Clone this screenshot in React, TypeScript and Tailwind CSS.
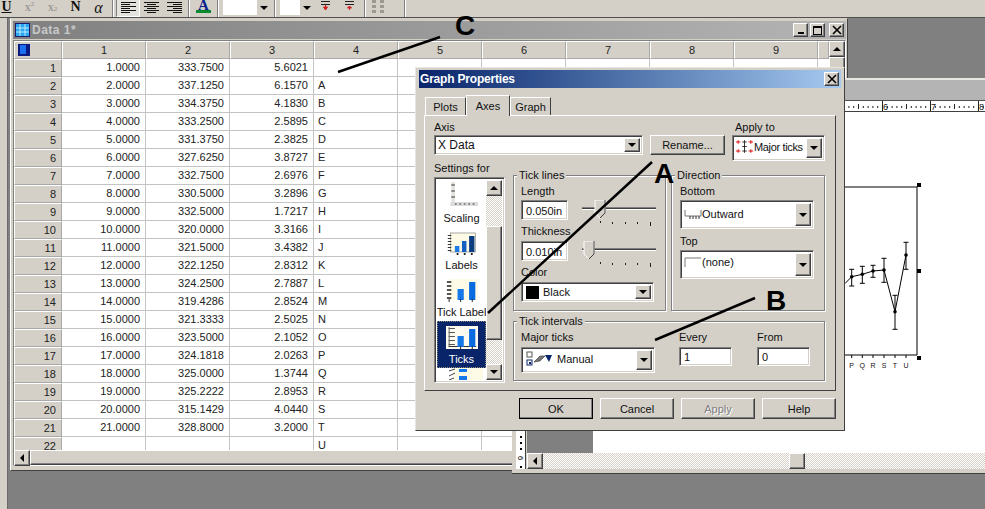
import type { ReactNode } from "react";

const RAISED = "border border-t-white border-l-white border-r-[#404040] border-b-[#404040] shadow-[inset_-1px_-1px_0_#808080] bg-[#d4d0c8]";
const SUNKEN = "border border-t-[#808080] border-l-[#808080] border-r-white border-b-white shadow-[inset_1px_1px_0_#404040,inset_-1px_-1px_0_#d4d0c8] bg-white";
const DITHER = "bg-[repeating-conic-gradient(#d4d0c8_0%_25%,#ffffff_0%_50%)] bg-[length:2px_2px]";

const ROWS = [
  ["1.0000", "333.7500", "5.6021"],
  ["2.0000", "337.1250", "6.1570"],
  ["3.0000", "334.3750", "4.1830"],
  ["4.0000", "333.2500", "2.5895"],
  ["5.0000", "331.3750", "2.3825"],
  ["6.0000", "327.6250", "3.8727"],
  ["7.0000", "332.7500", "2.6976"],
  ["8.0000", "330.5000", "3.2896"],
  ["9.0000", "332.5000", "1.7217"],
  ["10.0000", "320.0000", "3.3166"],
  ["11.0000", "321.5000", "3.4382"],
  ["12.0000", "322.1250", "2.8312"],
  ["13.0000", "324.2500", "2.7887"],
  ["14.0000", "319.4286", "2.8524"],
  ["15.0000", "321.3333", "2.5025"],
  ["16.0000", "323.5000", "2.1052"],
  ["17.0000", "324.1818", "2.0263"],
  ["18.0000", "325.0000", "1.3744"],
  ["19.0000", "325.2222", "2.8953"],
  ["20.0000", "315.1429", "4.0440"],
  ["21.0000", "328.8000", "3.2000"],
  ["", "", ""],
];
const LETTERS = ["", "A", "B", "C", "D", "E", "F", "G", "H", "I", "J", "K", "L", "M", "N", "O", "P", "Q", "R", "S", "T", "U"];

function Arrow({ dir }: { dir: "up" | "down" | "left" }) {
  const pts = dir === "up" ? "0,5 4,1 8,5" : dir === "down" ? "0,1 8,1 4,5" : "5,0 5,8 1,4";
  const size = dir === "left" ? "w-[6px] h-[8px]" : "w-[8px] h-[6px]";
  return (
    <svg viewBox={dir === "left" ? "0 0 6 8" : "0 0 8 6"} className={size}>
      <polygon points={pts} fill="#000" />
    </svg>
  );
}

function ScrollBtn({ dir }: { dir: "up" | "down" | "left" }) {
  return (
    <div className={`${RAISED} w-[16px] h-[16px] shrink-0 flex items-center justify-center`}>
      <Arrow dir={dir} />
    </div>
  );
}

function CloseGlyph() {
  return (
    <svg viewBox="0 0 10 10" className="w-[10px] h-[10px]">
      <path d="M1 1 L9 9 M9 1 L1 9" stroke="#000" strokeWidth="1.6" />
    </svg>
  );
}

function Combo({ className, children }: { className: string; children?: ReactNode }) {
  return (
    <div className={`${SUNKEN} ${className} flex items-stretch p-[2px]`}>
      <div className="flex-1 flex items-center min-w-0 overflow-hidden">{children}</div>
      <div className={`${RAISED} w-[16px] shrink-0 flex items-center justify-center`}>
        <Arrow dir="down" />
      </div>
    </div>
  );
}

function Group({ title, className, children }: { title: string; className: string; children: ReactNode }) {
  return (
    <div className={`relative border border-[#808080] shadow-[1px_1px_0_#fff,inset_1px_1px_0_#fff] ${className}`}>
      <span className="absolute -top-[7px] left-[3px] bg-[#d4d0c8] px-[2px] leading-[13px]">{title}</span>
      {children}
    </div>
  );
}

function Field({ label, className }: { label: string; className: string }) {
  return <div className={`${SUNKEN} ${className} flex items-center pl-[4px] pt-px`}>{label}</div>;
}

function Slider({ thumb }: { thumb: number }) {
  return (
    <svg width="76" height="28" viewBox="0 0 76 28" className="ml-[13px] shrink-0">
      <rect x="1" y="7" width="74" height="1" fill="#808080" />
      <rect x="1" y="8" width="74" height="1" fill="#404040" />
      <rect x="1" y="9" width="74" height="1" fill="#ffffff" />
      <path d={`M${thumb} 0 H${thumb + 10} V13 L${thumb + 5} 18 L${thumb} 13 Z`} fill="#d4d0c8" stroke="#fff" strokeWidth="1" />
      <path d={`M${thumb + 10} 0 V13 L${thumb + 5} 18`} fill="none" stroke="#404040" strokeWidth="1" />
      {[19, 31, 44, 56, 69].map((x) => (
        <rect key={x} x={x} y={x === 19 ? 21 : 22} width="1" height={x === 69 ? 4 : 2} fill="#202020" />
      ))}
    </svg>
  );
}

function Thumb({ kind }: { kind: "scaling" | "labels" | "ticklabel" | "ticks" }) {
  if (kind === "scaling") {
    return (
      <svg width="32" height="26" viewBox="0 0 36 26" preserveAspectRatio="none" className="-mt-[3px]">
        <rect x="6" y="0" width="4" height="22" fill="#e4e2dc" />
        {[2, 8, 14].map((y) => <rect key={y} x="6" y={y} width="4" height="2" fill="#8a8a8a" />)}
        <rect x="5" y="20" width="31" height="4" fill="#dcdcdc" />
        {[10, 15, 20, 25, 30].map((x) => <rect key={x} x={x} y="21" width="2" height="2" fill="#8a8a8a" />)}
      </svg>
    );
  }
  if (kind === "labels") {
    return (
      <svg width="32" height="23" viewBox="0 0 36 23" preserveAspectRatio="none">
        <rect x="5" y="1" width="28" height="19" fill="#fdfbe6" stroke="#6e6e6e" strokeWidth="0.6" />
        {[3, 6, 9, 12, 15, 18].map((y) => <rect key={y} x="2" y={y} width="4" height="1" fill="#333" />)}
        <rect x="10" y="14" width="5" height="6" fill="#1c7ae8" />
        <rect x="18" y="9" width="5" height="11" fill="#1560c0" />
        <rect x="26" y="4" width="6" height="16" fill="#0b3d80" />
        {[12, 20, 28].map((x) => <rect key={x} x={x} y="21" width="2" height="2" fill="#222" />)}
      </svg>
    );
  }
  const bars = (
    <>
      <rect x="13" y="10" width="7" height="11" fill="#1578e8" />
      <rect x="26" y="3" width="7" height="18" fill="#0a6ae0" />
      <rect x="16" y="20" width="1" height="3" fill="#111" />
      <rect x="29" y="20" width="1" height="3" fill="#111" />
    </>
  );
  if (kind === "ticklabel") {
    return (
      <svg width="32" height="23" viewBox="0 0 36 23" preserveAspectRatio="none">
        <rect x="4" y="0" width="32" height="21" fill="#fdfbe6" />
        {[2, 6, 10, 14, 18].map((y) => <rect key={y} x="1" y={y} width="5" height="2" fill="#555" />)}
        {bars}
        <rect x="3" y="20" width="1" height="3" fill="#111" />
      </svg>
    );
  }
  return (
    <svg width="32" height="23" viewBox="0 0 36 23" preserveAspectRatio="none">
      <rect x="0" y="0" width="36" height="23" fill="#fdfbf0" />
      <rect x="3" y="1" width="1" height="20" fill="#555" />
      {[2, 6, 10, 14, 18].map((y) => <rect key={y} x="3" y={y} width="7" height="1" fill="#555" />)}
      <rect x="3" y="20" width="31" height="1" fill="#333" />
      {bars}
    </svg>
  );
}

function ListItem({ label, kind, selected }: { label: string; kind: "scaling" | "labels" | "ticklabel" | "ticks"; selected?: boolean }) {
  return (
    <div
      className={`h-[47px] shrink-0 flex flex-col items-center pt-[5px] whitespace-nowrap ${
        selected ? "bg-[#0a246a] text-white outline-1 -outline-offset-1 outline-dotted outline-[#8f8f80]" : ""
      }`}
    >
      <div className="h-[23px]"><Thumb kind={kind} /></div>
      <span className="mt-[4px] leading-[13px]">{label}</span>
    </div>
  );
}

function SettingsList() {
  return (
    <div className={`${SUNKEN} h-[206px] w-[71px] flex p-[2px] overflow-hidden`}>
      <div className="w-[52px] flex flex-col overflow-hidden">
        <ListItem label="Scaling" kind="scaling" />
        <ListItem label="Labels" kind="labels" />
        <ListItem label="Tick Label" kind="ticklabel" />
        <ListItem label="Ticks" kind="ticks" selected />
        <svg width="52" height="16" viewBox="0 0 52 16" className="shrink-0">
          <rect x="16" y="0" width="30" height="16" fill="#fdfbe6" />
          <path d="M12 3 L18 1 M12 8 L18 5 M12 12 L17 10" stroke="#444" strokeWidth="1" />
          <rect x="22" y="1" width="8" height="3" fill="#1578e8" />
          <rect x="22" y="8" width="8" height="8" fill="#1578e8" />
        </svg>
      </div>
      <div className="w-[16px] ml-auto flex flex-col">
        <ScrollBtn dir="up" />
        <div className={`flex-1 flex flex-col ${DITHER}`}>
          <div className="h-[30px]" />
          <div className={`${RAISED} h-[114px]`} />
        </div>
        <ScrollBtn dir="down" />
      </div>
    </div>
  );
}

function DialogButton({ label, primary, disabled }: { label: string; primary?: boolean; disabled?: boolean }) {
  return (
    <div
      className={`${RAISED} w-[74px] h-[21px] flex items-center justify-center ${primary ? "outline outline-1 outline-black -outline-offset-1" : ""} ${
        disabled ? "text-[#808080] [text-shadow:1px_1px_0_#fff]" : ""
      }`}
    >
      {label}
    </div>
  );
}

function GraphProperties() {
  return (
    <div className="absolute left-[406px] top-[49px] w-[430px] h-[364px] z-20 bg-[#d4d0c8] border border-t-[#e8e6e0] border-l-[#e8e6e0] border-r-[#404040] border-b-[#404040] p-[2px] pb-0 text-[11px] leading-[14px] text-[#111]">
      <div className="h-[18px] mx-px bg-linear-to-r from-[#0a246a] to-[#a6caf0] flex items-center justify-between pl-px pr-[2px]">
        <span className="text-white font-bold text-[12px] tracking-[-0.2px]">Graph Properties</span>
        <div className={`${RAISED} w-[15px] h-[14px] flex items-center justify-center`}>
          <CloseGlyph />
        </div>
      </div>

      <div className="flex items-end h-[27px] ml-[7px]">
        <div className="w-[41px] h-[18px] border border-b-0 border-t-white border-l-white border-r-[#404040] flex items-center justify-center">Plots</div>
        <div className="w-[44px] h-[21px] border border-b-0 border-t-white border-l-white border-r-[#404040] flex items-start pt-[3px] justify-center relative z-10 -mb-px bg-[#d4d0c8]">Axes</div>
        <div className="w-[41px] h-[18px] border border-b-0 border-t-white border-l-white border-r-[#404040] flex items-center justify-center">Graph</div>
      </div>

      <div className="ml-[6px] w-[412px] h-[276px] border border-t-white border-l-white border-r-[#404040] border-b-[#404040] pl-[9px] pt-[4px]">
        <div className="flex h-[42px]">
          <div className="w-[209px]">
            <div className="h-[15px]">Axis</div>
            <Combo className="h-[20px]"><span className="pl-[1px] text-[12px]">X Data</span></Combo>
          </div>
          <div className={`${RAISED} ml-[7px] mt-[15px] w-[75px] h-[20px] flex items-center justify-center`}>Rename...</div>
          <div className="ml-[7px] w-[93px]">
            <div className="h-[15px] pl-[3px]">Apply to</div>
            <Combo className="h-[26px]">
              <div className="flex items-center -mt-[3px]">
                <svg width="19" height="15" viewBox="0 0 21 16" className="shrink-0">
                  <path d="M1 3 H6 M3.5 1 V5 M1 13 H6 M3.5 11 V15 M15 3 H20 M17.5 1 V5 M15 13 H20 M17.5 11 V15" stroke="#e00000" strokeWidth="1" />
                  <path d="M10.5 1 V15 M8 3 H13 M8 8 H13 M8 13 H13" stroke="#222" strokeWidth="1" />
                </svg>
                <span className="whitespace-nowrap tracking-[-0.35px]">Major ticks</span>
              </div>
            </Combo>
          </div>
        </div>

        <div className="flex">
          <div className="w-[71px]">
            <div className="h-[16px] -mt-px">Settings for</div>
            <SettingsList />
          </div>
          <div className="ml-[8px] mt-[13px]">
            <div className="flex gap-[5px]">
              <Group title="Tick lines" className="w-[153px] h-[136px] pl-[7px] pt-[8px]">
                <div className="h-[16px]">Length</div>
                <div className="flex h-[20px]">
                  <Field label="0.050in" className="w-[47px] h-[20px] shrink-0" />
                  <Slider thumb={14} />
                </div>
                <div className="h-[17px] mt-[4px]">Thickness</div>
                <div className="flex h-[20px]">
                  <Field label="0.010in" className="w-[47px] h-[20px] shrink-0" />
                  <Slider thumb={3} />
                </div>
                <div className="h-[16px] mt-[4px]">Color</div>
                <Combo className="h-[20px] w-[133px] mt-px">
                  <div className="w-[13px] h-[13px] bg-black ml-[2px] mr-[4px] shrink-0" />
                  <span>Black</span>
                </Combo>
              </Group>
              <Group title="Direction" className="w-[154px] h-[136px] pl-[8px] pt-[8px]">
                <div className="h-[16px]">Bottom</div>
                <Combo className="h-[29px] w-[134px]">
                  <div className="flex items-center -mt-[2px]">
                    <svg width="18" height="12" viewBox="0 0 18 12" className="ml-[1px] shrink-0">
                      <path d="M1 2 V8 H17 V2" fill="none" stroke="#777" strokeWidth="1" />
                      <path d="M6 8 V11 M9 8 V11 M12 8 V11 M15 8 V11" stroke="#333" strokeWidth="1" />
                    </svg>
                    <span>Outward</span>
                  </div>
                </Combo>
                <div className="h-[16px] mt-[5px]">Top</div>
                <Combo className="h-[29px] w-[134px]">
                  <div className="flex items-center -mt-[6px]">
                    <svg width="18" height="12" viewBox="0 0 18 12" className="ml-[1px] shrink-0">
                      <path d="M1 11 V2 H17" fill="none" stroke="#777" strokeWidth="1" />
                    </svg>
                    <span>(none)</span>
                  </div>
                </Combo>
              </Group>
            </div>
            <Group title="Tick intervals" className="w-[312px] h-[60px] mt-[10px] pl-[7px] pt-[8px] flex">
              <div className="w-[134px]">
                <div className="h-[17px]">Major ticks</div>
                <Combo className="h-[26px]">
                  <div className="flex items-center -mt-[3px]">
                    <svg width="28" height="16" viewBox="0 0 28 16" className="ml-[2px] shrink-0">
                      <rect x="1" y="1" width="5" height="5" fill="#fff" stroke="#555" />
                      <rect x="1" y="9" width="5" height="5" fill="#fff" stroke="#0a246a" />
                      <rect x="3" y="11" width="2" height="2" fill="#0a246a" />
                      <path d="M8 11 L14 5 H19 L14 10 Z" fill="#777" stroke="#333" strokeWidth="0.6" />
                      <path d="M19 4 H26 L23 11 Z" fill="#0a246a" />
                    </svg>
                    <span className="ml-[3px]">Manual</span>
                  </div>
                </Combo>
              </div>
              <div className="ml-[24px] w-[53px]">
                <div className="h-[17px]">Every</div>
                <Field label="1" className="h-[19px]" />
              </div>
              <div className="ml-[25px] w-[53px]">
                <div className="h-[17px]">From</div>
                <Field label="0" className="h-[19px]" />
              </div>
            </Group>
          </div>
        </div>
      </div>

      <div className="flex justify-end gap-[7px] mt-[7px] pr-[6px]">
        <DialogButton label="OK" primary />
        <DialogButton label="Cancel" />
        <DialogButton label="Apply" disabled />
        <DialogButton label="Help" />
      </div>
    </div>
  );
}

function DataWindow() {
  const colHead = "border-t border-l border-t-white border-l-white border-r border-b border-r-[#a8a8a8] border-b-[#a8a8a8] bg-[#d4d0c8] flex items-center justify-center";
  const rowHead = "w-[48px] shrink-0 border-t border-l border-t-white border-l-white border-r border-b border-r-[#a8a8a8] border-b-[#a8a8a8] bg-[#d4d0c8] flex items-center justify-end pr-[5px]";
  return (
    <div className="absolute left-[1px] top-0 w-[838px] h-[453px] bg-[#d4d0c8] border border-t-[#d4d0c8] border-l-white border-r-[#404040] border-b-[#404040] px-px pt-[1px] flex flex-col text-[11px] text-[#222]">
      <div className="h-[18px] shrink-0 ml-px mt-px bg-linear-to-r from-[#808080] to-[#b4b4b4] flex items-center pl-[2px] pr-[2px]">
        <svg width="15" height="14" viewBox="0 0 15 14" className="shrink-0">
          <rect x="0.5" y="0.5" width="14" height="13" fill="#28a8f0" stroke="#1c1c70" />
          <path d="M5 1 V13 M10 1 V13 M1 5 H14 M1 9 H14" stroke="#bfe8ff" strokeWidth="1" />
        </svg>
        <span className="ml-[2px] font-bold text-[12px] text-[#c8c8c8] tracking-[0.5px]">Data 1*</span>
        <div className="ml-auto flex gap-[2px]">
          <div className={`${RAISED} w-[15px] h-[14px] flex items-end justify-center pb-[2px]`}><div className="w-[6px] h-[2px] bg-black" /></div>
          <div className={`${RAISED} w-[15px] h-[14px] flex items-center justify-center`}><div className="w-[9px] h-[9px] border border-black border-t-2" /></div>
          <div className={`${RAISED} w-[15px] h-[14px] ml-[2px] flex items-center justify-center`}><CloseGlyph /></div>
        </div>
      </div>

      <div className="mt-px mb-[4px] ml-px flex-1 min-h-0 flex flex-col border border-t-[#808080] border-l-[#808080] border-r-white border-b-white">
        <div className="flex-1 min-h-0 flex">
          <div className="flex-1 min-w-0 overflow-hidden bg-white">
            <div className="flex h-[18px]">
              <div className={`${rowHead} !justify-start pl-[3px]`}>
                <svg width="12" height="12" viewBox="0 0 12 12">
                  <rect width="12" height="12" fill="#0a1a80" />
                  <rect x="2" y="1" width="6" height="9" fill="#1c70f0" />
                </svg>
              </div>
              {["1", "2", "3", "4", "5", "6", "7", "8", "9"].map((c) => (
                <div key={c} className={`${colHead} w-[84px] shrink-0`}>{c}</div>
              ))}
              <div className={`${colHead} flex-1`} />
            </div>
            {ROWS.map((r, i) => (
              <div key={i} className="flex h-[18px]">
                <div className={rowHead}>{i + 1}</div>
                {r.map((v, j) => (
                  <div key={j} className="w-[84px] shrink-0 border-r border-b border-[#c4c4c4] flex items-center justify-end pr-[5px]">{v}</div>
                ))}
                <div className="w-[84px] shrink-0 border-r border-b border-[#c4c4c4] flex items-center pl-[4px]">{LETTERS[i]}</div>
                {[0, 1, 2, 3, 4].map((k) => (
                  <div key={k} className="w-[84px] shrink-0 border-r border-b border-[#c4c4c4]" />
                ))}
              </div>
            ))}
          </div>
          <div className="w-[16px] shrink-0 flex flex-col bg-[#d4d0c8]">
            <ScrollBtn dir="up" />
            <div className={`${RAISED} h-[60px]`} />
          </div>
        </div>
        <div className="h-[15px] shrink-0 flex">
          <ScrollBtn dir="left" />
          <div className={`${RAISED} flex-1`} />
        </div>
      </div>
    </div>
  );
}

function GraphWindow() {
  const rulerTicks = Array.from({ length: 70 }, (_, i) => i);
  const points = [
    { x: 851.7, y: 276.7, t: 269.3, b: 286, l: "P" },
    { x: 862.3, y: 274.3, t: 266.3, b: 283.3, l: "Q" },
    { x: 873, y: 271, t: 265.3, b: 277.3, l: "R" },
    { x: 884, y: 270, t: 258.3, b: 282.3, l: "S" },
    { x: 895, y: 311.7, t: 295.3, b: 329.3, l: "T" },
    { x: 906, y: 255, t: 242.3, b: 269.3, l: "U" },
  ];
  return (
    <div className="absolute left-[503px] top-[60px] w-[490px] h-[395px] z-10 bg-[#d4d0c8] border-t-2 border-t-[#e8e6e0] pb-[4px] flex flex-col shadow-[0_1px_0_#404040]">
      <div className="h-[21px] shrink-0 bg-[#b4b4b4] border-b border-b-[#505050]" />
      <svg width="490" height="11" viewBox="512 101 490 11" className="shrink-0">
        <rect x="512" y="101" width="490" height="10" fill="#fff" />
        <rect x="512" y="111" width="490" height="1" fill="#404040" />
        {rulerTicks.map((i) => {
          const x = 834 + i * 4.8;
          const major = i % 10 === 0;
          const mid = i % 5 === 0;
          return <rect key={i} x={x} y={major ? 101 : mid ? 104 : 106} width="1" height={major ? 10 : mid ? 5 : 2} fill="#222" />;
        })}
        {[6, 7, 8].map((n, i) => (
          <text key={n} x={883 + i * 48} y="110" fontSize="9" fill="#111" fontFamily="Liberation Sans">{n}</text>
        ))}
      </svg>
      <div className="flex-1 min-h-0 flex">
        <div className="w-[15px] shrink-0 flex justify-end pr-px">
          <div className="w-[10px] bg-white border-r border-[#404040] flex flex-col items-center justify-end gap-[4px] pb-[1px] text-[8px] leading-[8px]">
            <span className="w-[2px] h-[2px] bg-black" />
            <span className="w-[2px] h-[2px] bg-black" />
            <span className="w-[2px] h-[2px] bg-black" />
            <span className="rotate-90">6</span>
            <span className="w-[2px] h-[2px] bg-black" />
          </div>
        </div>
        <div className="flex-1 min-w-0 flex flex-col">
          <div className="flex-1 min-h-0 flex">
            <div className="w-[66px] bg-[#808080]" />
            <div className="flex-1 bg-white relative">
              <svg width="140" height="200" viewBox="845 180 140 200" className="absolute left-[252px] top-[68px]">
                <path d="M845 187 H917 V355 H845" fill="none" stroke="#000" strokeWidth="1" />
                <rect x="917" y="183" width="4" height="4" fill="#000" />
                <rect x="917" y="269" width="4" height="4" fill="#000" />
                <rect x="917" y="356" width="4" height="4" fill="#000" />
                <path d="M845 283.5 L851.7 276.7 L862.3 274.3 L873 271 L884 270 L895 311.7 L906 255" fill="none" stroke="#000" strokeWidth="1" />
                {points.map((p) => (
                  <g key={p.l}>
                    <path d={`M${p.x} ${p.t} V${p.b} M${p.x - 2.5} ${p.t} H${p.x + 2.5} M${p.x - 2.5} ${p.b} H${p.x + 2.5} M${p.x} 355 V358`} stroke="#000" strokeWidth="1" fill="none" />
                    <circle cx={p.x} cy={p.y} r="1.8" fill="#000" />
                    <text x={p.x} y="368" fontSize="7" textAnchor="middle" fill="#111" fontFamily="Liberation Sans">{p.l}</text>
                  </g>
                ))}
              </svg>
            </div>
          </div>
          <div className={`h-[16px] shrink-0 flex ${DITHER}`}>
            <ScrollBtn dir="left" />
            <div className="w-[246px]" />
            <div className={`${RAISED} w-[16px] h-[16px]`} />
          </div>
        </div>
      </div>
    </div>
  );
}

function AlignIcon({ mode }: { mode: "left" | "center" | "right" }) {
  const rows = [15, 9, 15, 9, 15, 9];
  return (
    <svg width="15" height="14" viewBox="0 0 15 14">
      {rows.map((w, i) => (
        <rect key={i} x={mode === "left" ? 0 : mode === "center" ? (15 - w) / 2 : 15 - w} y={i * 2 + 1} width={w} height="1" fill="#111" />
      ))}
    </svg>
  );
}

function Sep({ className }: { className: string }) {
  return <div className={`w-[2px] h-[18px] shrink-0 border-l border-l-[#808080] border-r border-r-white ${className}`} />;
}

function Toolbar() {
  const cell = "w-[23px] shrink-0 flex justify-center items-center";
  return (
    <div className="h-[18px] shrink-0 bg-[#d4d0c8] border-b border-b-[#505050] flex items-start overflow-hidden font-['Liberation_Serif',serif] text-[#111]">
      <div className={`${cell} -ml-[5px] font-bold text-[14px] leading-[13px] underline`}>U</div>
      <div className={`${cell} text-[#8a8a8a] text-[12px] leading-[15px]`}>x<sup className="text-[7px]">2</sup></div>
      <div className={`${cell} text-[#8a8a8a] text-[12px] leading-[15px]`}>x<sub className="text-[7px]">2</sub></div>
      <div className={`${cell} font-bold text-[14px] leading-[13px]`}>N</div>
      <div className={`${cell} italic text-[16px] leading-[15px]`}>α</div>
      <Sep className="ml-[2px]" />
      <div className="ml-[2px] w-[24px] h-[17px] shrink-0 flex items-center justify-center border-l border-b border-r border-l-[#808080] border-b-white border-r-white bg-[#e4e2dc]">
        <AlignIcon mode="left" />
      </div>
      <div className="w-[23px] shrink-0 h-[16px] flex items-center justify-center"><AlignIcon mode="center" /></div>
      <div className="w-[23px] shrink-0 h-[16px] flex items-center justify-center"><AlignIcon mode="right" /></div>
      <Sep className="ml-[2px]" />
      <div className="w-[27px] shrink-0 flex flex-col items-center">
        <span className="font-bold text-[15px] leading-[10px] text-[#0a1f8a]">A</span>
        <div className="w-[15px] h-[3px] bg-[#0a8a30]" />
      </div>
      <Sep className="" />
      <div className="ml-[4px] w-[47px] h-[15px] bg-white flex justify-end shrink-0">
        <div className="w-[13px] bg-[#d4d0c8] flex items-center justify-center"><Arrow dir="down" /></div>
      </div>
      <Sep className="ml-[4px]" />
      <div className="ml-[4px] w-[33px] h-[15px] bg-white flex justify-end shrink-0">
        <div className="w-[13px] bg-[#d4d0c8] flex items-center justify-center"><Arrow dir="down" /></div>
      </div>
      <svg width="9" height="12" viewBox="0 0 9 12" className="ml-[8px] shrink-0">
        <path d="M0 1.5 H9 M0 4.5 H9" stroke="#222" />
        <path d="M4.5 5 V8 M2.5 7 L4.5 10 L6.5 7 Z" stroke="#d02020" fill="#d02020" />
      </svg>
      <svg width="9" height="12" viewBox="0 0 9 12" className="ml-[15px] shrink-0">
        <path d="M0 1.5 H9 M0 4.5 H9" stroke="#222" />
        <path d="M4.5 7 V10 M2.5 8 L4.5 6 L6.5 8 Z" stroke="#d02020" fill="#d02020" />
      </svg>
      <Sep className="ml-[10px]" />
      <svg width="13" height="13" viewBox="0 0 13 13" className="ml-[6px] shrink-0">
        {[0, 5, 10].map((y) => [0, 8].map((x) => <rect key={`${x}-${y}`} x={x} y={y} width="4" height="3" fill="#9a9890" />))}
      </svg>
      <Sep className="ml-[19px]" />
    </div>
  );
}

export default function App() {
  return (
    <div className="relative w-[985px] h-[509px] overflow-hidden bg-[#808080] flex flex-col font-['Liberation_Sans',Arial,sans-serif]">
      <Toolbar />
      <div className="flex-1 min-h-0 flex">
        <div className="w-[8px] shrink-0 bg-[#d4d0c8] border-r border-r-[#6a6a6a]" />
        <div className="flex-1 min-w-0 relative ml-px">
          <DataWindow />
          <GraphWindow />
          <GraphProperties />
        </div>
      </div>

      <svg width="985" height="509" viewBox="0 0 985 509" className="absolute left-0 top-0 z-30 pointer-events-none">
        <path d="M338 72 L440 37" stroke="#000" strokeWidth="2.5" />
        <path d="M652 162 L488 313" stroke="#000" strokeWidth="2.5" />
        <path d="M755 298 L655 340" stroke="#000" strokeWidth="2.5" />
      </svg>
      <span className="absolute z-30 left-[455px] top-[10px] font-bold text-[28px] leading-[32px] text-black">C</span>
      <span className="absolute z-30 left-[654px] top-[158px] font-bold text-[28px] leading-[32px] text-black">A</span>
      <span className="absolute z-30 left-[766px] top-[285px] font-bold text-[28px] leading-[32px] text-black">B</span>
    </div>
  );
}
